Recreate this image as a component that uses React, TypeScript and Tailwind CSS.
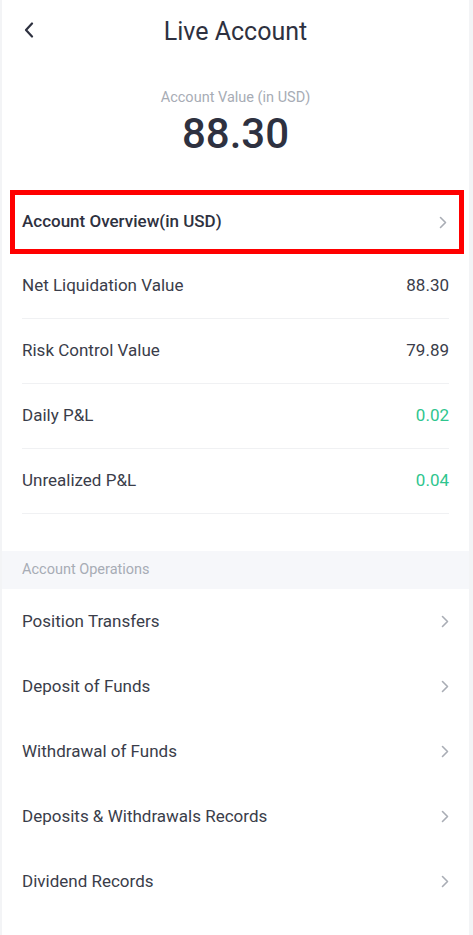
import React from 'react';

const font = { fontFamily: 'Roboto, "Liberation Sans", sans-serif' };

const Chevron: React.FC = () => (
  <svg width="8" height="13" viewBox="0 0 8 13" fill="none">
    <path d="M1.5 1.5L6.5 6.5L1.5 11.5" stroke="#a9adb5" strokeWidth="1.6" strokeLinecap="round" strokeLinejoin="round" />
  </svg>
);

const summary = [
  { label: 'Net Liquidation Value', value: '88.30', green: false },
  { label: 'Risk Control Value', value: '79.89', green: false },
  { label: 'Daily P&L', value: '0.02', green: true },
  { label: 'Unrealized P&L', value: '0.04', green: true },
];

const operations = [
  'Position Transfers',
  'Deposit of Funds',
  'Withdrawal of Funds',
  'Deposits & Withdrawals Records',
  'Dividend Records',
];

export default function App() {
  return (
    <div className="min-h-[935px] bg-[#f3f4f6] pl-[2px] pr-[4px]" style={font}>
      <div className="min-h-[935px] bg-white">
        {/* header */}
        <div className="relative flex h-[62px] items-center justify-center">
          <button className="absolute left-[21px] top-[22px] flex h-[16px] w-[12px] items-center justify-center">
            <svg width="10" height="16" viewBox="0 0 10 16" fill="none">
              <path d="M8 1.5L2 8L8 14.5" stroke="#2e3140" strokeWidth="2.2" strokeLinecap="round" strokeLinejoin="round" />
            </svg>
          </button>
          <h1 className="mt-[1px] text-[25px] font-normal text-[#2e3140]">Live Account</h1>
        </div>

        {/* account value */}
        <div className="flex flex-col items-center pt-[27px]">
          <span className="text-[14.5px] leading-[18px] text-[#a7acb5]">Account Value (in USD)</span>
          <span className="mt-[4px] text-[42px] leading-[46px] font-medium text-[#2e3140]">88.30</span>
        </div>

        {/* overview */}
        <div className="mt-[33px] ml-[8px] mr-[5px] flex h-[64px] items-center justify-between border-[5px] border-[#ff0000] pl-[7px] pr-[12px]">
          <span className="text-[17px] font-medium text-[#2e3140]">Account Overview(in USD)</span>
          <Chevron />
        </div>

        <div className="px-5">
          {summary.map((row) => (
            <div key={row.label} className="flex h-[65px] items-center justify-between border-b border-[#f0f1f3]">
              <span className="text-[17px] text-[#3a3d4a]">{row.label}</span>
              <span className={`text-[17px] ${row.green ? 'text-[#2fc58e]' : 'text-[#3a3d4a]'}`}>{row.value}</span>
            </div>
          ))}
        </div>

        {/* operations */}
        <div className="mt-[37px] flex h-[38px] items-center bg-[#f6f7fa] px-5">
          <span className="text-[14.5px] text-[#a7acb5]">Account Operations</span>
        </div>
        <div className="px-5">
          {operations.map((op) => (
            <div key={op} className="flex h-[65px] items-center justify-between">
              <span className="text-[17px] text-[#3a3d4a]">{op}</span>
              <Chevron />
            </div>
          ))}
        </div>
      </div>
    </div>
  );
}
